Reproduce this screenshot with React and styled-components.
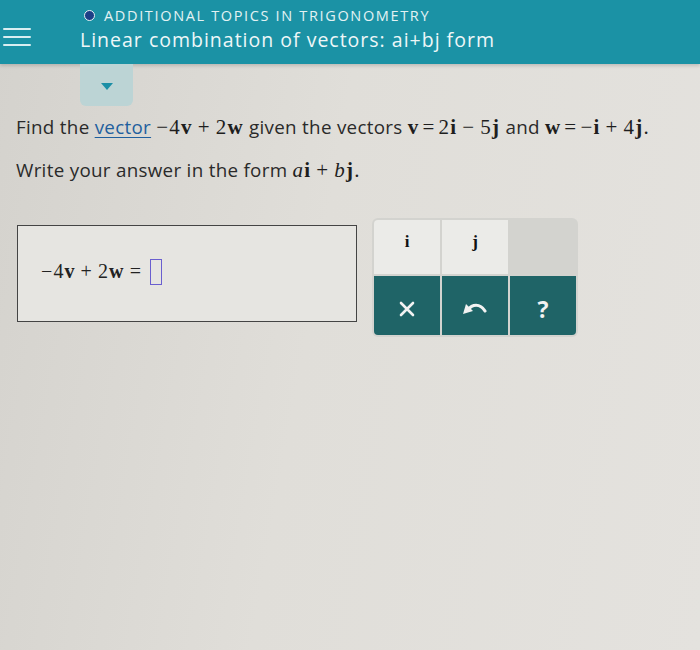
import React from "react";
import styled, { createGlobalStyle } from "styled-components";

const Global = createGlobalStyle`
  html, body { margin: 0; padding: 0; }
  body {
    background: #dddbd6;
    font-family: "Open Sans", "Liberation Sans", sans-serif;
    width: 700px;
    height: 650px;
    overflow: hidden;
  }
`;

const Page = styled.div`
  width: 700px;
  height: 650px;
  background: linear-gradient(100deg, #d4d2cd 0%, #e0ded9 45%, #e4e2de 100%);
  display: flex;
  flex-direction: column;
`;

const Header = styled.header`
  height: 64px;
  background: #1b92a5;
  display: flex;
  align-items: center;
  box-shadow: 0 2px 3px rgba(0, 0, 0, 0.15);
`;

const Burger = styled.div`
  width: 28px;
  margin-left: 3px;
  display: flex;
  flex-direction: column;
  gap: 6px;
  margin-top: 10px;
  span {
    display: block;
    height: 2px;
    background: #d9eef1;
    border-radius: 1px;
  }
`;

const Titles = styled.div`
  margin-left: 49px;
  display: flex;
  flex-direction: column;
  gap: 1px;
  margin-top: -6px;
`;

const Topic = styled.div`
  display: flex;
  align-items: center;
  gap: 9px;
  margin-left: 4px;
  color: #e3f2f4;
  font-size: 14.5px;
  letter-spacing: 1.65px;
`;

const Dot = styled.span`
  width: 9px;
  height: 9px;
  border-radius: 50%;
  background: #1c3f86;
  border: 1.5px solid #e6f2f4;
`;

const Title = styled.div`
  color: #eef7f8;
  font-size: 19.5px;
  letter-spacing: 1px;
`;

const TabRow = styled.div`
  padding-left: 80px;
`;

const Tab = styled.div`
  width: 53px;
  height: 42px;
  background: #bcd4d5;
  border-radius: 0 0 6px 6px;
  display: flex;
  justify-content: center;
  align-items: center;
  padding-top: 2px;
  box-sizing: border-box;
`;

const Triangle = styled.span`
  width: 0;
  height: 0;
  border-left: 6px solid transparent;
  border-right: 6px solid transparent;
  border-top: 7px solid #1b8fa6;
`;

const Content = styled.main`
  padding: 0 16px;
  color: #2a2a2a;
`;

const Para = styled.p`
  margin: 0;
  font-size: 18.8px;
  letter-spacing: 0.3px;
  line-height: 26px;
  white-space: nowrap;
  margin-top: ${(p) => p.$top}px;
`;

const Link = styled.span`
  color: #1f5f9e;
  text-decoration: underline;
  text-underline-offset: 3px;
`;

const M = styled.span`
  font-family: "Liberation Serif", "Times New Roman", serif;
  font-size: 21px;
  letter-spacing: 1.2px;
  color: #1e1e1e;
`;
const Op = styled.span`
  margin: 0 ${(p) => p.$gap || 5}px;
`;
const B = styled.b`
  font-weight: bold;
`;
const I = styled.i``;

const AnswerRow = styled.div`
  display: flex;
  align-items: flex-start;
  gap: 15px;
  margin-top: 35px;
`;

const AnswerBox = styled.div`
  width: 340px;
  height: 97px;
  margin-top: 7px;
  margin-left: 1px;
  border: 1.5px solid #444;
  box-sizing: border-box;
  background: #e6e5e1;
  display: flex;
  align-items: center;
  padding-left: 23px;
  padding-bottom: 4px;
`;

const Expr = styled.span`
  font-family: "Liberation Serif", "Times New Roman", serif;
  font-size: 20px;
  letter-spacing: 1.1px;
  color: #222;
  display: flex;
  align-items: center;
`;

const Blank = styled.span`
  display: inline-block;
  width: 10px;
  height: 24px;
  border: 1.5px solid #6a5fcf;
  margin-left: 3px;
`;

const Pad = styled.div`
  width: 206px;
  background: #d3d3cf;
  border-radius: 6px;
  padding: 2px;
  box-sizing: border-box;
  display: grid;
  grid-template-columns: repeat(3, 1fr);
  grid-template-rows: 54px 59px;
  gap: 2px;
  overflow: hidden;
`;

const Key = styled.div`
  display: flex;
  align-items: center;
  justify-content: center;
  background: ${(p) => (p.$dark ? "#1f6467" : p.$empty ? "transparent" : "#ebebe8")};
  color: ${(p) => (p.$dark ? "#f2f2f2" : "#111")};
  font-family: ${(p) => (p.$dark ? '"Open Sans", sans-serif' : '"Liberation Serif", serif')};
  font-weight: bold;
  font-size: ${(p) => (p.$dark ? "23px" : "17px")};
  padding-top: ${(p) => (p.$dark ? "6px" : "0")};
  padding-bottom: ${(p) => (p.$dark ? "0" : "10px")};
  border-radius: ${(p) => p.$r || "0"};
`;

export default function App() {
  return (
    <>
      <Global />
      <Page>
        <Header>
          <Burger>
            <span />
            <span />
            <span />
          </Burger>
          <Titles>
            <Topic>
              <Dot />
              ADDITIONAL TOPICS IN TRIGONOMETRY
            </Topic>
            <Title>Linear combination of vectors: ai+bj form</Title>
          </Titles>
        </Header>
        <TabRow>
          <Tab>
            <Triangle />
          </Tab>
        </TabRow>
        <Content>
          <Para $top={8}>
            Find the <Link>vector</Link>{" "}
            <M>
              −4<B>v</B>
              <Op>+</Op>2<B>w</B>
            </M>{" "}
            given the vectors{" "}
            <M>
              <B>v</B>
              <Op $gap={3}>=</Op>2<B>i</B>
              <Op>−</Op>5<B>j</B>
            </M>{" "}
            and{" "}
            <M>
              <B>w</B>
              <Op $gap={3}>=</Op>−<B>i</B>
              <Op>+</Op>4<B>j</B>.
            </M>
          </Para>
          <Para $top={17}>
            Write your answer in the form{" "}
            <M>
              <I>a</I>
              <B>i</B>
              <Op>+</Op>
              <I>b</I>
              <B>j</B>.
            </M>
          </Para>
          <AnswerRow>
            <AnswerBox>
              <Expr>
                −4<B>v</B>
                <Op>+</Op>2<B>w</B>
                <Op>=</Op>
                <Blank />
              </Expr>
            </AnswerBox>
            <Pad>
              <Key $r="4px 0 0 0">i</Key>
              <Key>j</Key>
              <Key $empty />
              <Key $dark $r="0 0 0 4px">
                <svg width="16" height="16" viewBox="0 0 16 16">
                  <path d="M2 2 L14 14 M14 2 L2 14" stroke="#f2f2f2" strokeWidth="2.6" strokeLinecap="round" />
                </svg>
              </Key>
              <Key $dark>
                <svg width="26" height="15" viewBox="0 0 26 15">
                  <path d="M6 9 C10 3, 18 2, 23 10" stroke="#f2f2f2" strokeWidth="3.2" fill="none" strokeLinecap="round" />
                  <path d="M1 13 L4 3 L11 10 Z" fill="#f2f2f2" />
                </svg>
              </Key>
              <Key $dark $r="0 0 4px 0">?</Key>
            </Pad>
          </AnswerRow>
        </Content>
      </Page>
    </>
  );
}
